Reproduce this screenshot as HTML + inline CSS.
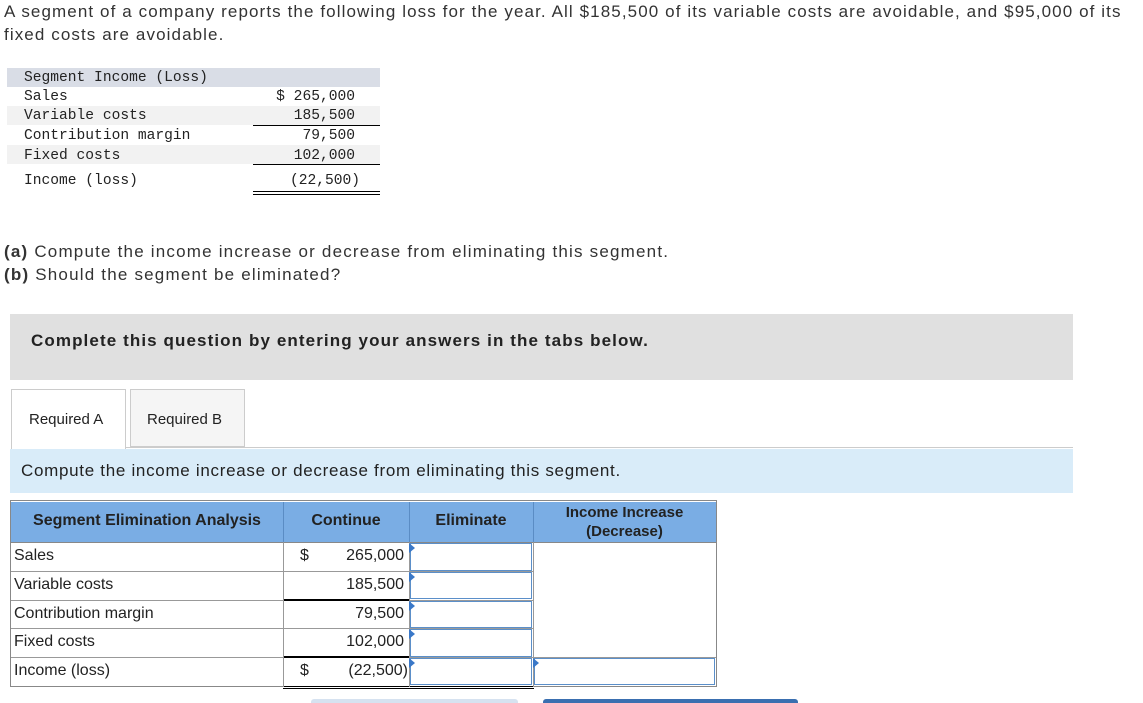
<!DOCTYPE html><html><head><style>
body{margin:0;width:1143px;height:703px;overflow:hidden;background:#fff;font-family:"Liberation Sans",sans-serif;color:#333;position:relative}
.a{position:absolute}
.m{font-family:"Liberation Mono",monospace;font-size:14.6px;color:#222;line-height:17px}
.t{font-size:17px;color:#333}
.inp{position:absolute;box-sizing:border-box;border:1px solid #5b8fc9;background:#fff}
.tri{position:absolute;width:0;height:0;border-top:5px solid transparent;border-bottom:5px solid transparent;border-left:6px solid #3a78c8}
.n{font-size:16px;color:#222}
</style></head><body>
<div class="a t" style="left:4px;top:0;line-height:23px;white-space:nowrap;letter-spacing:1.1px">A segment of a company reports the following loss for the year. All $185,500 of its variable costs are avoidable, and $95,000 of its<br>fixed costs are avoidable.</div>

<div class="a" style="left:7px;top:68px;width:373px;height:19px;background:#d9dde6"></div>
<div class="a" style="left:7px;top:106px;width:373px;height:19px;background:#f2f2f2"></div>
<div class="a" style="left:7px;top:145px;width:373px;height:19px;background:#f2f2f2"></div>
<div class="a m" style="left:24px;top:70px">Segment Income (Loss)</div>
<div class="a m" style="left:24px;top:89px">Sales</div>
<div class="a m" style="left:24px;top:108px">Variable costs</div>
<div class="a m" style="left:24px;top:128px">Contribution margin</div>
<div class="a m" style="left:24px;top:148px">Fixed costs</div>
<div class="a m" style="left:24px;top:173px">Income (loss)</div>
<div class="a m" style="left:253px;top:89px;width:102px;text-align:right">$ 265,000</div>
<div class="a m" style="left:253px;top:108px;width:102px;text-align:right">185,500</div>
<div class="a" style="left:253px;top:125px;width:127px;height:1px;background:#000"></div>
<div class="a m" style="left:253px;top:128px;width:102px;text-align:right">79,500</div>
<div class="a m" style="left:253px;top:148px;width:102px;text-align:right">102,000</div>
<div class="a" style="left:253px;top:164px;width:127px;height:1px;background:#000"></div>
<div class="a m" style="left:253px;top:173px;width:107px;text-align:right">(22,500)</div>
<div class="a" style="left:253px;top:191px;width:127px;height:1px;background:#000"></div>
<div class="a" style="left:253px;top:194px;width:127px;height:1px;background:#000"></div>

<div class="a t" style="left:4px;top:240px;line-height:23px;letter-spacing:1.2px"><b>(a)</b> Compute the income increase or decrease from eliminating this segment.<br><b>(b)</b> Should the segment be eliminated?</div>

<div class="a" style="left:10px;top:314px;width:1063px;height:66px;background:#e0e0e0"></div>
<div class="a" style="left:31px;top:331px;font-size:17px;font-weight:bold;color:#222;letter-spacing:1.1px">Complete this question by entering your answers in the tabs below.</div>

<div class="a" style="left:11px;top:389px;width:115px;height:60px;border:1px solid #ccc;border-bottom:none;background:#fff;box-sizing:border-box"></div>
<div class="a" style="left:130px;top:389px;width:115px;height:58px;border:1px solid #ccc;background:#f5f5f5;box-sizing:border-box"></div>
<div class="a" style="left:29px;top:411px;font-size:15px;color:#222">Required A</div>
<div class="a" style="left:147px;top:411px;font-size:15px;color:#222">Required B</div>
<div class="a" style="left:126px;top:447px;width:947px;height:1px;background:#ccc"></div>
<div class="a" style="left:10px;top:449px;width:1063px;height:44px;background:#d9ecf9"></div>
<div class="a" style="left:21px;top:461px;font-size:17px;color:#222;letter-spacing:0.7px">Compute the income increase or decrease from eliminating this segment.</div>

<div class="a" style="left:10px;top:500px;width:707px;height:187px;border:1px solid #888;box-sizing:border-box"></div>
<div class="a" style="left:11px;top:502px;width:705px;height:40px;background:#7aade4"></div>
<div class="a" style="left:283px;top:502px;width:1px;height:40px;background:#5a8cc4"></div>
<div class="a" style="left:409px;top:502px;width:1px;height:40px;background:#5a8cc4"></div>
<div class="a" style="left:533px;top:502px;width:1px;height:40px;background:#5a8cc4"></div>
<div class="a" style="left:11px;top:512px;width:272px;text-align:center;font-weight:bold;font-size:16px;color:#222">Segment Elimination Analysis</div>
<div class="a" style="left:283px;top:512px;width:126px;text-align:center;font-weight:bold;font-size:16px;color:#222">Continue</div>
<div class="a" style="left:409px;top:512px;width:124px;text-align:center;font-weight:bold;font-size:16px;color:#222">Eliminate</div>
<div class="a" style="left:533px;top:503px;width:183px;text-align:center;font-weight:bold;font-size:15px;color:#222;line-height:19px">Income Increase<br>(Decrease)</div>
<div class="a" style="left:11px;top:542px;width:705px;height:1px;background:#888"></div>
<div class="a" style="left:11px;top:571px;width:522px;height:1px;background:#999"></div>
<div class="a" style="left:11px;top:600px;width:522px;height:1px;background:#999"></div>
<div class="a" style="left:283px;top:599px;width:126px;height:2px;background:#000"></div>
<div class="a" style="left:11px;top:628px;width:522px;height:1px;background:#999"></div>
<div class="a" style="left:11px;top:657px;width:705px;height:1px;background:#999"></div>
<div class="a" style="left:283px;top:656px;width:126px;height:2px;background:#000"></div>
<div class="a" style="left:283px;top:686px;width:251px;height:3px;border-top:1px solid #000;border-bottom:1px solid #000;box-sizing:border-box"></div>
<div class="a" style="left:283px;top:542px;width:1px;height:145px;background:#999"></div>
<div class="a" style="left:409px;top:542px;width:1px;height:145px;background:#999"></div>
<div class="a" style="left:533px;top:542px;width:1px;height:145px;background:#999"></div>

<div class="a n" style="left:14px;top:547px">Sales</div>
<div class="a n" style="left:14px;top:576px">Variable costs</div>
<div class="a n" style="left:14px;top:605px">Contribution margin</div>
<div class="a n" style="left:14px;top:633px">Fixed costs</div>
<div class="a n" style="left:14px;top:662px">Income (loss)</div>
<div class="a n" style="left:300px;top:547px">$</div>
<div class="a n" style="left:300px;top:662px">$</div>
<div class="a n" style="left:310px;top:547px;width:94px;text-align:right">265,000</div>
<div class="a n" style="left:310px;top:576px;width:94px;text-align:right">185,500</div>
<div class="a n" style="left:310px;top:605px;width:94px;text-align:right">79,500</div>
<div class="a n" style="left:310px;top:633px;width:94px;text-align:right">102,000</div>
<div class="a n" style="left:310px;top:662px;width:98px;text-align:right">(22,500)</div>

<div class="inp" style="left:410px;top:543px;width:122px;height:28px"></div><div class="tri" style="left:409px;top:543px"></div>
<div class="inp" style="left:410px;top:572px;width:122px;height:27px"></div><div class="tri" style="left:409px;top:572px"></div>
<div class="inp" style="left:410px;top:601px;width:122px;height:27px"></div><div class="tri" style="left:409px;top:601px"></div>
<div class="inp" style="left:410px;top:629px;width:122px;height:28px"></div><div class="tri" style="left:409px;top:629px"></div>
<div class="inp" style="left:410px;top:658px;width:122px;height:27px"></div><div class="tri" style="left:409px;top:658px"></div>
<div class="inp" style="left:534px;top:658px;width:181px;height:27px"></div><div class="tri" style="left:533px;top:658px"></div>

<div class="a" style="left:311px;top:699px;width:207px;height:4px;background:#d6e2f0;border-radius:3px 3px 0 0"></div>
<div class="a" style="left:543px;top:699px;width:255px;height:4px;background:#3a6fb0;border-radius:3px 3px 0 0"></div>
</body></html>
